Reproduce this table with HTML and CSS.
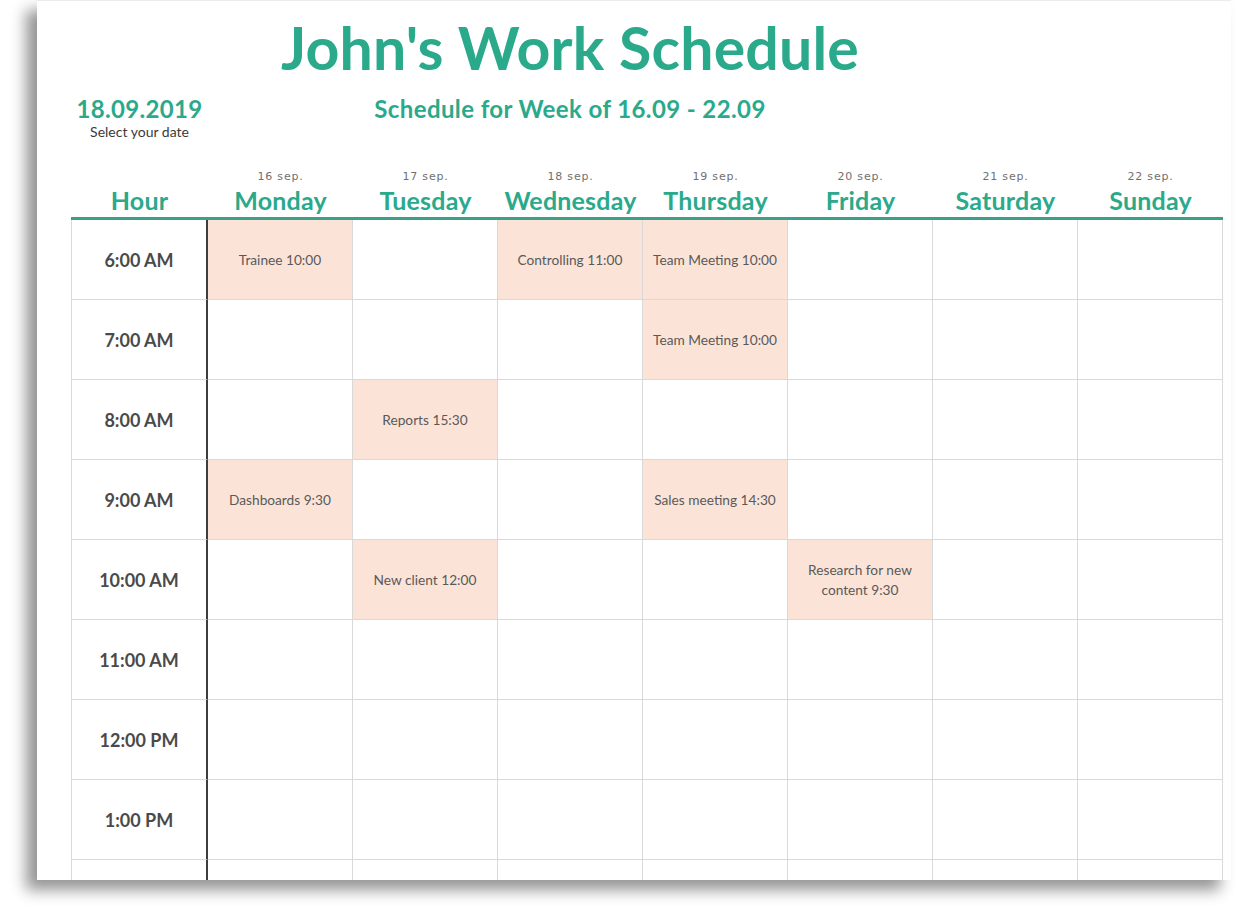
FILE: index.html
```html
<!DOCTYPE html>
<html lang="en">
<head>
<meta charset="utf-8">
<title>John's Work Schedule</title>
<link rel="stylesheet" href="styles.css">
</head>
<body>
<div class="sheet">
  <h1 class="title">John's Work Schedule</h1>
  <div class="info">
    <div class="date-block">
      <div class="date">18.09.2019</div>
      <div class="date-hint">Select your date</div>
    </div>
    <div class="week">Schedule for Week of 16.09 - 22.09</div>
  </div>

  <div class="grid head">
    <div class="hcell"><div class="dlabel"></div><div class="dname">Hour</div></div>
    <div class="hcell"><div class="dlabel">16 sep.</div><div class="dname">Monday</div></div>
    <div class="hcell"><div class="dlabel">17 sep.</div><div class="dname">Tuesday</div></div>
    <div class="hcell"><div class="dlabel">18 sep.</div><div class="dname">Wednesday</div></div>
    <div class="hcell"><div class="dlabel">19 sep.</div><div class="dname">Thursday</div></div>
    <div class="hcell"><div class="dlabel">20 sep.</div><div class="dname">Friday</div></div>
    <div class="hcell"><div class="dlabel">21 sep.</div><div class="dname">Saturday</div></div>
    <div class="hcell"><div class="dlabel">22 sep.</div><div class="dname">Sunday</div></div>
  </div>

  <div class="grid body">
    <div class="cell hour">6:00 AM</div>
    <div class="cell ev">Trainee 10:00</div>
    <div class="cell"></div>
    <div class="cell ev">Controlling 11:00</div>
    <div class="cell ev">Team Meeting 10:00</div>
    <div class="cell"></div>
    <div class="cell"></div>
    <div class="cell"></div>

    <div class="cell hour">7:00 AM</div>
    <div class="cell"></div>
    <div class="cell"></div>
    <div class="cell"></div>
    <div class="cell ev">Team Meeting 10:00</div>
    <div class="cell"></div>
    <div class="cell"></div>
    <div class="cell"></div>

    <div class="cell hour">8:00 AM</div>
    <div class="cell"></div>
    <div class="cell ev">Reports 15:30</div>
    <div class="cell"></div>
    <div class="cell"></div>
    <div class="cell"></div>
    <div class="cell"></div>
    <div class="cell"></div>

    <div class="cell hour">9:00 AM</div>
    <div class="cell ev">Dashboards 9:30</div>
    <div class="cell"></div>
    <div class="cell"></div>
    <div class="cell ev">Sales meeting 14:30</div>
    <div class="cell"></div>
    <div class="cell"></div>
    <div class="cell"></div>

    <div class="cell hour">10:00 AM</div>
    <div class="cell"></div>
    <div class="cell ev">New client 12:00</div>
    <div class="cell"></div>
    <div class="cell"></div>
    <div class="cell ev">Research for new content 9:30</div>
    <div class="cell"></div>
    <div class="cell"></div>

    <div class="cell hour">11:00 AM</div>
    <div class="cell"></div>
    <div class="cell"></div>
    <div class="cell"></div>
    <div class="cell"></div>
    <div class="cell"></div>
    <div class="cell"></div>
    <div class="cell"></div>

    <div class="cell hour">12:00 PM</div>
    <div class="cell"></div>
    <div class="cell"></div>
    <div class="cell"></div>
    <div class="cell"></div>
    <div class="cell"></div>
    <div class="cell"></div>
    <div class="cell"></div>

    <div class="cell hour">1:00 PM</div>
    <div class="cell"></div>
    <div class="cell"></div>
    <div class="cell"></div>
    <div class="cell"></div>
    <div class="cell"></div>
    <div class="cell"></div>
    <div class="cell"></div>

    <div class="cell hour"></div>
    <div class="cell"></div>
    <div class="cell"></div>
    <div class="cell"></div>
    <div class="cell"></div>
    <div class="cell"></div>
    <div class="cell"></div>
    <div class="cell"></div>
  </div>
</div>
</body>
</html>
```

FILE: styles.css
```css
html, body {
  margin: 0;
  padding: 0;
  background: #ffffff;
}

body {
  width: 1238px;
  height: 910px;
  overflow: hidden;
  font-family: Lato, "Open Sans", sans-serif;
}

.sheet {
  box-sizing: border-box;
  margin-left: 37px;
  width: 1194px;
  height: 880px;
  overflow: hidden;
  background: #ffffff;
  border-top: 1px solid #ececec;
  padding: 0 8px 0 34px;
  box-shadow: -11px 10px 14px rgba(0, 0, 0, 0.42);
}

.title {
  margin: 0;
  width: 998px;
  height: 91px;
  line-height: 93px;
  text-align: center;
  font-size: 59px;
  font-weight: 700;
  color: #2aa98b;
  letter-spacing: 0.2px;
}

.info {
  display: flex;
  height: 46px;
}

.date-block {
  width: 137px;
  text-align: center;
}

.date {
  height: 34px;
  line-height: 34px;
  font-size: 24px;
  font-weight: 700;
  letter-spacing: 0.3px;
  color: #2aa98b;
}

.date-hint {
  height: 12px;
  line-height: 12px;
  font-size: 14px;
  color: #3a3a3a;
}

.week {
  width: 724px;
  height: 33px;
  line-height: 33px;
  text-align: center;
  font-size: 24px;
  font-weight: 700;
  letter-spacing: 0.4px;
  color: #2aa98b;
}

.grid {
  display: grid;
  grid-template-columns: 137px repeat(7, 145px);
}

.head {
  margin-top: 29px;
  border-bottom: 3px solid #3aa188;
}

.hcell {
  text-align: center;
}

.dlabel {
  height: 16px;
  line-height: 20px;
  font-family: "DejaVu Sans", Verdana, sans-serif;
  font-size: 11px;
  letter-spacing: 0.8px;
  color: #707070;
}

.dname {
  height: 34px;
  line-height: 34px;
  font-size: 25px;
  font-weight: 700;
  letter-spacing: 0.2px;
  color: #2aa98b;
}

.body {
  grid-auto-rows: 80px;
}

.cell {
  box-sizing: border-box;
  display: flex;
  align-items: center;
  justify-content: center;
  text-align: center;
  padding: 0 3px;
  border-right: 1px solid #d9d9d9;
  border-bottom: 1px solid #d9d9d9;
  font-size: 13.7px;
  line-height: 20px;
  color: #595959;
}

.hour {
  border-left: 1px solid #d9d9d9;
  border-right: 2px solid #3d3d3d;
  font-size: 18px;
  font-weight: 700;
  color: #4a4a4a;
}

.ev {
  background: #fbe4d7;
}
```
